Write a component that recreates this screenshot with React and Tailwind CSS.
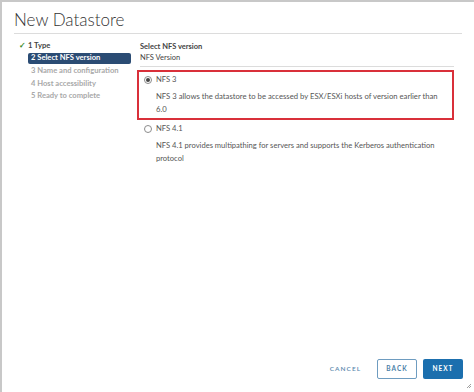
import React from "react";

const steps = [
  { n: "1 Type", state: "done" },
  { n: "2 Select NFS version", state: "active" },
  { n: "3 Name and configuration", state: "todo" },
  { n: "4 Host accessibility", state: "todo" },
  { n: "5 Ready to complete", state: "todo" },
];

function Radio({ checked }) {
  return (
    <span className="flex h-[8px] w-[8px] items-center justify-center rounded-full border border-[#8c8c8c] bg-white">
      {checked && <span className="h-[4px] w-[4px] rounded-full bg-[#444]" />}
    </span>
  );
}

export default function App() {
  return (
    <div className="relative flex h-[392px] w-[474px] flex-col overflow-hidden border-t-2 border-l-2 border-[#c8c8c8] bg-white font-['Lato',sans-serif] text-[#565656]">
      {/* header */}
      <div className="mx-[12px] mt-[8px] border-b border-[#dcdcdc] pb-[3px]">
        <h1 className="text-[17px] leading-[20px] font-light text-[#333]">New Datastore</h1>
      </div>

      <div className="flex flex-1">
        {/* steps */}
        <div className="mt-[5px] w-[130px] shrink-0 pl-[17px]">
          {steps.map((s) => (
            <div key={s.n} className="flex h-[12.7px] items-center text-[7.6px]">
              {s.state === "done" && (
                <>
                  <span className="w-[9px] text-[8px] leading-none font-bold text-[#3d8b2a]">✓</span>
                  <span className="font-bold text-[#444]">{s.n}</span>
                </>
              )}
              {s.state === "active" && (
                <span className="ml-[9px] flex h-[11px] w-[103px] items-center rounded-[2px] bg-[#2b4c74] pl-[3px] font-bold text-white">
                  {s.n}
                </span>
              )}
              {s.state === "todo" && <span className="ml-[9px] pl-[3px] font-bold text-[#a8a8a8]">{s.n}</span>}
            </div>
          ))}
        </div>

        {/* content */}
        <div className="mt-[7px] mr-[20px] flex-1 pl-[8px]">
          <div className="text-[7.5px] leading-[11px] font-bold text-[#444]">Select NFS version</div>
          <div className="border-b border-[#dcdcdc] pb-[3px] text-[7.5px] leading-[11px] text-[#444]">NFS Version</div>

          <div className="mt-[3px] -ml-[3px] border-2 border-[#d9303a] px-[5px] pt-[2px] pb-[2px]">
            <div className="flex items-center gap-[4px] text-[7.6px] leading-[11px]">
              <Radio checked />
              <span>NFS 3</span>
            </div>
            <p className="mt-[5px] pr-[5px] pl-[12px] text-[7.7px] leading-[13px]">
              NFS 3 allows the datastore to be accessed by ESX/ESXi hosts of version earlier than 6.0
            </p>
          </div>

          <div className="mt-[3px] pl-[4px]">
            <div className="flex items-center gap-[4px] text-[7.6px] leading-[11px]">
              <Radio />
              <span>NFS 4.1</span>
            </div>
            <p className="mt-[5px] pl-[12px] text-[7.6px] leading-[13px]">
              NFS 4.1 provides multipathing for servers and supports the Kerberos authentication protocol
            </p>
          </div>
        </div>
      </div>

      {/* footer */}
      <div className="mb-[13px] flex items-center justify-end gap-[6px] pr-[11px]">
        <button className="mr-[10px] text-[6.5px] font-semibold tracking-[1px] text-[#5a88ad]">CANCEL</button>
        <button className="h-[20px] w-[40px] rounded-[2px] border border-[#6e9cc0] text-[6.5px] font-bold tracking-[1px] text-[#4a7fa8]">
          BACK
        </button>
        <button className="h-[20px] w-[40px] rounded-[2px] bg-[#1b6fae] text-[6.5px] font-bold tracking-[1px] text-white">
          NEXT
        </button>
      </div>

      <svg className="absolute right-[2px] bottom-[3px]" width="6" height="6" viewBox="0 0 6 6">
        <path d="M1 5 L5 1 M3 5 L5 3" stroke="#888" strokeWidth="0.8" />
      </svg>
    </div>
  );
}
